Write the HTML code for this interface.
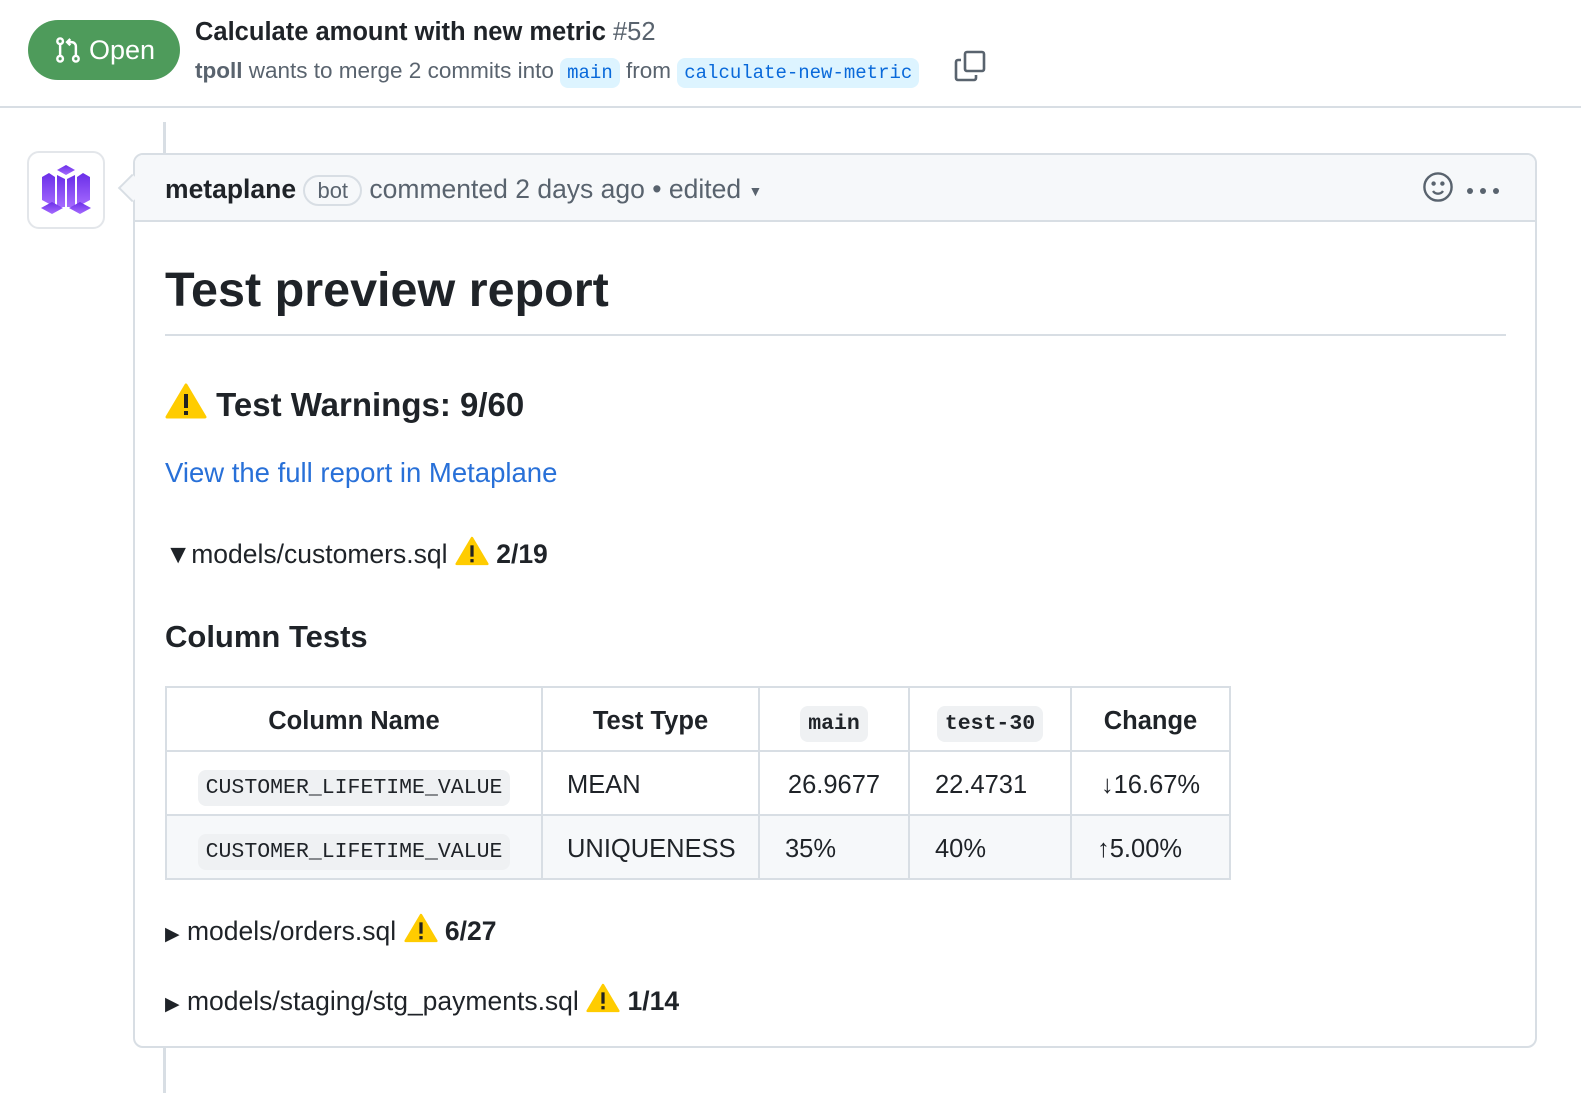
<!DOCTYPE html>
<html><head><meta charset="utf-8"><style>
*{margin:0;padding:0;box-sizing:border-box}
body{width:1581px;height:1093px;background:#fff;font-family:"Liberation Sans",sans-serif;color:#1f2328;position:relative;overflow:hidden}
.a{position:absolute;white-space:nowrap}
.code{font-family:"Liberation Mono",monospace;border-radius:8px}
.warn{display:inline-block;vertical-align:-3px}
table{border-collapse:collapse;position:absolute;left:165px;top:686px;font-size:25.5px}
td,th{border:2px solid #d8dee4;text-align:center;height:64px;padding:0;padding-top:4px}
th{font-weight:bold}
tr.alt td{background:#f6f8fa}
.tc{background:#eff1f3;font-family:"Liberation Mono",monospace;font-size:21.5px;padding:6px 8px;border-radius:8px}
</style></head><body>
<div class="a" style="left:28px;top:20px;width:152px;height:60px;border-radius:30px;background:#4e9b5b;color:#fff;font-size:27px;line-height:60px">
<svg width="28" height="28" viewBox="0 0 16 16" style="position:absolute;left:26px;top:16px" fill="none" stroke="#fff" stroke-width="1.4"><circle cx="3.5" cy="3" r="1.6"/><circle cx="3.5" cy="13" r="1.6"/><circle cx="12.5" cy="13" r="1.6"/><path d="M3.5 4.6v6.8M12.5 11.4V6a2.5 2.5 0 0 0-2.5-2.5H7.5M9.3 1.7 7.5 3.5l1.8 1.8"/></svg>
<span style="position:absolute;left:61px">Open</span></div>
<div class="a" style="left:195px;top:16px;font-size:25.5px;font-weight:bold;line-height:32px">Calculate amount with new metric <span style="font-weight:normal;color:#59636e">#52</span></div>
<div class="a" style="left:195px;top:55px;font-size:22.5px;line-height:32px;color:#59636e"><b style="color:#59636e">tpoll</b> wants to merge 2 commits into <span class="code" style="background:#ddf4ff;color:#0969da;font-size:19px;padding:4px 7px">main</span> from <span class="code" style="background:#ddf4ff;color:#0969da;font-size:19px;padding:4px 7px">calculate-new-metric</span></div>
<svg class="a" style="left:954px;top:50px" width="32" height="32" viewBox="0 0 16 16" fill="none" stroke="#59636e" stroke-width="1.3"><rect x="5.5" y="1" width="9.5" height="9.5" rx="1"/><path d="M3.5 5H2a1 1 0 0 0-1 1v8a1 1 0 0 0 1 1h8a1 1 0 0 0 1-1v-1.5"/></svg>
<div class="a" style="left:0;top:106px;width:1581px;height:2px;background:#d8dee4"></div>
<div class="a" style="left:163px;top:122px;width:3px;height:32px;background:#d8dee4"></div>
<div class="a" style="left:163px;top:1047px;width:3px;height:46px;background:#d8dee4"></div>
<div class="a" style="left:27px;top:151px;width:78px;height:78px;border:2px solid #e3e6ea;border-radius:12px;background:#fff">
<svg width="54" height="54" viewBox="0 0 54 54" style="position:absolute;left:10px;top:10px"><defs><linearGradient id="g" x1="0" y1="0" x2="0" y2="1"><stop offset="0" stop-color="#6a2ee8"/><stop offset="1" stop-color="#a66bff"/></linearGradient></defs>
<g fill="url(#g)"><path d="M27 2 36 7 27 12 18 7Z"/><path d="M3 14 10 10 16 14 16 44 3 37Z"/><path d="M18 12 26 16 26 44 18 44Z"/><path d="M28 16 36 12 36 44 28 44Z"/><path d="M38 14 44 10 51 14 51 37 38 44Z"/><path d="M2 45 13 39 24 45 13 51Z"/><path d="M30 45 41 39 52 45 41 51Z"/></g></svg></div>
<div class="a" style="left:133px;top:153px;width:1404px;height:895px;border:2px solid #d8dee4;border-radius:10px;background:#fff"></div>
<div class="a" style="left:135px;top:155px;width:1400px;height:67px;background:#f6f8fa;border-bottom:2px solid #d8dee4;border-radius:8px 8px 0 0"></div>
<div class="a" style="left:122px;top:178px;width:20px;height:20px;background:#f6f8fa;border-left:2px solid #d8dee4;border-bottom:2px solid #d8dee4;transform:rotate(45deg)"></div>
<div class="a" style="left:165px;top:173px;font-size:26.5px;line-height:32px;color:#59636e"><b style="color:#1f2328">metaplane</b> <span style="border:2px solid #d8dee4;border-radius:18px;padding:1px 12px;font-size:22px">bot</span> commented 2 days ago • edited <span style="font-size:14px;vertical-align:2px">▼</span></div>
<svg class="a" style="left:1422px;top:171px" width="32" height="32" viewBox="0 0 16 16" fill="none" stroke="#59636e" stroke-width="1.2"><circle cx="8" cy="8" r="6.8"/><path d="M5.5 10a3 3 0 0 0 5 0"/><circle cx="5.8" cy="6.3" r=".5" fill="#59636e"/><circle cx="10.2" cy="6.3" r=".5" fill="#59636e"/></svg>
<div class="a" style="left:1466px;top:182px"><svg width="34" height="8"><circle cx="4" cy="4" r="3" fill="#59636e"/><circle cx="17" cy="4" r="3" fill="#59636e"/><circle cx="30" cy="4" r="3" fill="#59636e"/></svg></div>
<div class="a" style="left:165px;top:260px;font-size:48.5px;font-weight:bold;line-height:60px">Test preview report</div>
<div class="a" style="left:165px;top:334px;width:1341px;height:2px;background:#d8dee4"></div>
<div class="a" style="left:165px;top:383px;font-size:33px;font-weight:bold;line-height:40px"><svg class="warn" width="42" height="36" viewBox="0 0 42 36"><path d="M21 2 40 34H2Z" fill="#ffcc00" stroke="#ffcc00" stroke-width="3" stroke-linejoin="round"/><rect x="19" y="11" width="4" height="14" fill="#222"/><rect x="19" y="28" width="4" height="4" fill="#222"/></svg> Test Warnings: 9/60</div>
<div class="a" style="left:165px;top:457px;font-size:27.5px;line-height:32px;color:#2870d8">View the full report in Metaplane</div>
<div class="a" style="left:165px;top:536px;font-size:26.5px;line-height:32px">▼models/customers.sql <svg class="warn" width="34" height="30" viewBox="0 0 42 36"><path d="M21 2 40 34H2Z" fill="#ffcc00" stroke="#ffcc00" stroke-width="3" stroke-linejoin="round"/><rect x="19" y="11" width="4" height="14" fill="#222"/><rect x="19" y="28" width="4" height="4" fill="#222"/></svg> <b>2/19</b></div>
<div class="a" style="left:165px;top:618px;font-size:31px;font-weight:bold;line-height:38px">Column Tests</div>
<table>
<tr><th style="width:376px">Column Name</th><th style="width:217px">Test Type</th><th style="width:150px"><span class="tc" style="font-weight:bold">main</span></th><th style="width:162px"><span class="tc" style="font-weight:bold">test-30</span></th><th style="width:159px">Change</th></tr>
<tr><td><span class="tc">CUSTOMER_LIFETIME_VALUE</span></td><td style="text-align:left;padding-left:24px">MEAN</td><td>26.9677</td><td style="text-align:left;padding-left:25px">22.4731</td><td>↓16.67%</td></tr>
<tr class="alt"><td><span class="tc">CUSTOMER_LIFETIME_VALUE</span></td><td style="text-align:left;padding-left:24px">UNIQUENESS</td><td style="text-align:left;padding-left:25px">35%</td><td style="text-align:left;padding-left:25px">40%</td><td style="text-align:left;padding-left:25px">↑5.00%</td></tr>
</table>
<div class="a" style="left:165px;top:913px;font-size:26.5px;line-height:32px"><span style="font-size:19px">▶</span> models/orders.sql <svg class="warn" width="34" height="30" viewBox="0 0 42 36"><path d="M21 2 40 34H2Z" fill="#ffcc00" stroke="#ffcc00" stroke-width="3" stroke-linejoin="round"/><rect x="19" y="11" width="4" height="14" fill="#222"/><rect x="19" y="28" width="4" height="4" fill="#222"/></svg> <b>6/27</b></div>
<div class="a" style="left:165px;top:983px;font-size:26.5px;line-height:32px"><span style="font-size:19px">▶</span> models/staging/stg_payments.sql <svg class="warn" width="34" height="30" viewBox="0 0 42 36"><path d="M21 2 40 34H2Z" fill="#ffcc00" stroke="#ffcc00" stroke-width="3" stroke-linejoin="round"/><rect x="19" y="11" width="4" height="14" fill="#222"/><rect x="19" y="28" width="4" height="4" fill="#222"/></svg> <b>1/14</b></div>
</body></html>
